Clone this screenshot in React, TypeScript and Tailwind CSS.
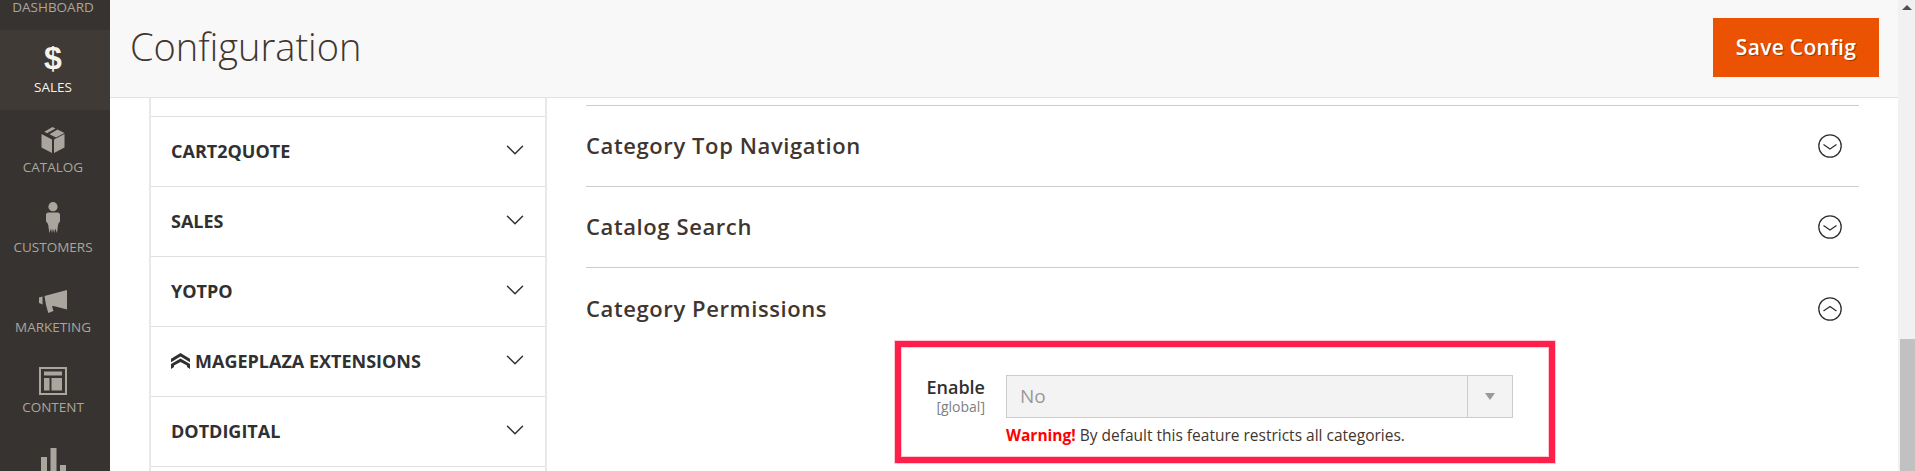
import React from 'react';
import { ChevronDown } from 'lucide-react';

const font = { fontFamily: '"Open Sans", sans-serif' };

function DollarIcon() {
  return <span className="font-['Liberation_Sans'] text-[32px] leading-[30px] font-bold text-[#f7f3eb]">$</span>;
}

function BoxIcon() {
  return (
    <svg width="24" height="26" viewBox="0 0 24 26" fill="#aaa69e">
      <path d="M11.500 0l3 1.500-8.500 4.700L3.300 4.700zM16.500 2.600l7 3.400L15 10.500 8.500 7.300zM.5 7l10.500 5.600V26L.5 20.500zM23.500 7v13.500L13 26V12.600z" />
    </svg>
  );
}

function CustomerIcon() {
  return (
    <svg width="14" height="31" viewBox="0 0 14 31" fill="#aaa69e">
      <circle cx="7" cy="4.700" r="4.600" />
      <path d="M2.500 10.500h9c1.500 0 2.500 1 2.500 2.500v6.500l-1.300 1.500-.7 2.200-1 7.800-1.800-4.500-1 4.500L7 26.500 6 31l-1-4.500L3.300 31l-1-7.800-.9-2.200L0 19.500V13c0-1.500 1-2.500 2.500-2.500z" />
    </svg>
  );
}

function MarketingIcon() {
  return (
    <svg width="28" height="23" viewBox="0 0 28 23" fill="#aaa69e">
      <path d="M0 7.500l3.500-1v8L0 13zM5.500 6L28 0v19.500L14.500 16l-1.500.3 1.500 4.700-5.200 2L7 15z" />
    </svg>
  );
}

function ContentIcon() {
  return (
    <svg width="28" height="28" viewBox="0 0 28 28" fill="#aaa69e" className="-mb-[2px]">
      <path fillRule="evenodd" d="M0 0h28v28H0zM2 2v24h24V2zM5 4.500h18v4H5zM5 11h5.500v12.500H5zM12.500 11H23v12.500H12.500z" />
    </svg>
  );
}

function ReportsIcon() {
  return (
    <svg width="25" height="25" viewBox="0 0 25 25" fill="#aaa69e">
      <path d="M0 9h6v16H0zM9.500 0h6v25h-6zM19 17h6v8h-6z" />
    </svg>
  );
}

function MageplazaIcon() {
  return (
    <svg width="19" height="16" viewBox="0 0 19 16" fill="#303030" className="shrink-0">
      <path d="M9.500 0L19 5.800v3.400L9.500 3.600 0 9.200V5.800z" />
      <path d="M9.500 5.400L19 11v5l-3-1.900v-1.700L9.500 9 3 12.400v1.700L0 16v-5z" />
    </svg>
  );
}

function CircleChevron({ open }: { open?: boolean }) {
  return (
    <svg width="24" height="24" viewBox="0 0 24 24" fill="none" stroke="#303030" strokeWidth="1.300">
      <circle cx="12" cy="12" r="11.200" />
      <polyline points={open ? '5.500,14 12,9.500 18.500,14' : '5.500,10.500 12,15 18.500,10.500'} />
    </svg>
  );
}

function SidebarItem({ label, icon, active }: { label?: string; icon: React.ReactNode; active?: boolean }) {
  return (
    <div className={`h-20 shrink-0 pr-[4px] flex flex-col items-center ${active ? 'bg-[#403a36]' : ''}`}>
      <div className="h-[43px] flex items-end justify-center">{icon}</div>
      {label && (
        <div className={`mt-[5px] text-[13.500px] leading-[18px] ${active ? 'text-[#f7f3eb]' : 'text-[#aaa69e]'}`}>
          {label}
        </div>
      )}
    </div>
  );
}

function Sidebar() {
  return (
    <div className="w-[110px] h-[471px] shrink-0 bg-[#373330] overflow-hidden">
      <div className="-mt-[50px] flex flex-col">
        <SidebarItem label="DASHBOARD" icon={null} />
        <SidebarItem label="SALES" icon={<DollarIcon />} active />
        <SidebarItem label="CATALOG" icon={<BoxIcon />} />
        <SidebarItem label="CUSTOMERS" icon={<CustomerIcon />} />
        <SidebarItem label="MARKETING" icon={<MarketingIcon />} />
        <SidebarItem label="CONTENT" icon={<ContentIcon />} />
        <SidebarItem icon={<ReportsIcon />} />
      </div>
    </div>
  );
}

function NavRow({ label, icon }: { label: string; icon?: React.ReactNode }) {
  return (
    <div className="h-[70px] shrink-0 border-t border-[#e0e0e0] pl-5 pr-[15px] flex items-center justify-between">
      <div className="-mt-[1px] flex items-center gap-[5px] text-[18px] font-bold text-[#303030]">
        {icon}
        {label}
      </div>
      <ChevronDown className="w-[30px] h-[30px] text-[#303030] -mt-[4px]" strokeWidth={1.2} />
    </div>
  );
}

function SectionTitle({ label, open, className }: { label: string; open?: boolean; className: string }) {
  return (
    <div className={`shrink-0 border-t border-[#cccccc] flex items-center justify-between pr-[17px] ${className}`}>
      <div className="-mt-[1px] text-[22px] font-semibold tracking-[0.6px] text-[#41362f]">{label}</div>
      <CircleChevron open={open} />
    </div>
  );
}

function PermissionsBox() {
  return (
    <div className="ml-[309px] w-[660px] h-[122px] shrink-0 border-[6px] border-[#ff1f4b] shadow-[0_0_0_1px_#ffc9d3,inset_0_0_0_1px_#ffc9d3] pt-[28px] pl-[30px] flex gap-[21px]">
      <div className="w-[54px] shrink-0 flex flex-col items-end whitespace-nowrap">
        <div className="text-[18px] leading-[24px] font-semibold text-[#303030]">Enable</div>
        <div className="text-[14px] leading-[18px] mt-[-1px] text-[#808080]">[global]</div>
      </div>
      <div className="w-[507px] shrink-0">
        <div className="h-[43px] bg-[#f3f3f3] border border-[#cccccc] flex items-stretch">
          <div className="flex-1 pl-[13px] text-[19px] leading-[41px] text-[#999999]">No</div>
          <div className="w-[45px] border-l border-[#cccccc] flex items-center justify-center">
            <div className="w-0 h-0 border-x-[5px] border-x-transparent border-t-[7px] border-t-[#999999]" />
          </div>
        </div>
        <div className="mt-[7px] text-[15.500px] leading-[20px] text-[#41362f] whitespace-nowrap">
          <span className="font-bold text-[#ff0000]">Warning!</span> By default this feature restricts all categories.
        </div>
      </div>
    </div>
  );
}

export default function App() {
  return (
    <div style={font} className="w-[1915px] h-[471px] overflow-hidden flex bg-white">
      <Sidebar />
      <div className="flex-1 min-w-0 flex flex-col">
        <div className="h-[98px] shrink-0 bg-[#f8f8f8] border-b border-[#e3e3e3] flex items-start justify-between pl-[20px] pr-[19px]">
          <h1 className="mt-[27px] text-[38px] font-light text-[#41362f] leading-none">Configuration</h1>
          <button className="mt-[18px] w-[166px] h-[59px] bg-[#eb5202] text-white text-[21px] font-semibold tracking-[0.3px] [text-shadow:1px_1px_0_#a33a00]">
            Save Config
          </button>
        </div>
        <div className="flex-1 min-h-0 flex overflow-hidden">
          <div className="w-[398px] ml-[39px] shrink-0 border-x-2 border-[#e8e8e8] pt-[18px] flex flex-col">
            <NavRow label="CART2QUOTE" />
            <NavRow label="SALES" />
            <NavRow label="YOTPO" />
            <NavRow label="MAGEPLAZA EXTENSIONS" icon={<MageplazaIcon />} />
            <NavRow label="DOTDIGITAL" />
            <div className="border-t border-[#e0e0e0]" />
          </div>
          <div className="flex-1 min-w-0 pl-[39px] pr-[39px] pt-[7px] flex flex-col">
            <SectionTitle className="h-[81px]" label="Category Top Navigation" />
            <SectionTitle className="h-[81px]" label="Catalog Search" />
            <SectionTitle className="h-[74px] pt-[8px]" label="Category Permissions" open />
            <PermissionsBox />
          </div>
        </div>
      </div>
      <div className="w-[17px] shrink-0 bg-[#f1f1f1] flex flex-col items-center">
        <div className="mt-[5px] w-0 h-0 border-x-[5px] border-x-transparent border-b-[5px] border-b-[#505050]" />
        <div className="mt-[329px] ml-[2px] w-[15px] flex-1 bg-[#c1c1c1]" />
      </div>
    </div>
  );
}
